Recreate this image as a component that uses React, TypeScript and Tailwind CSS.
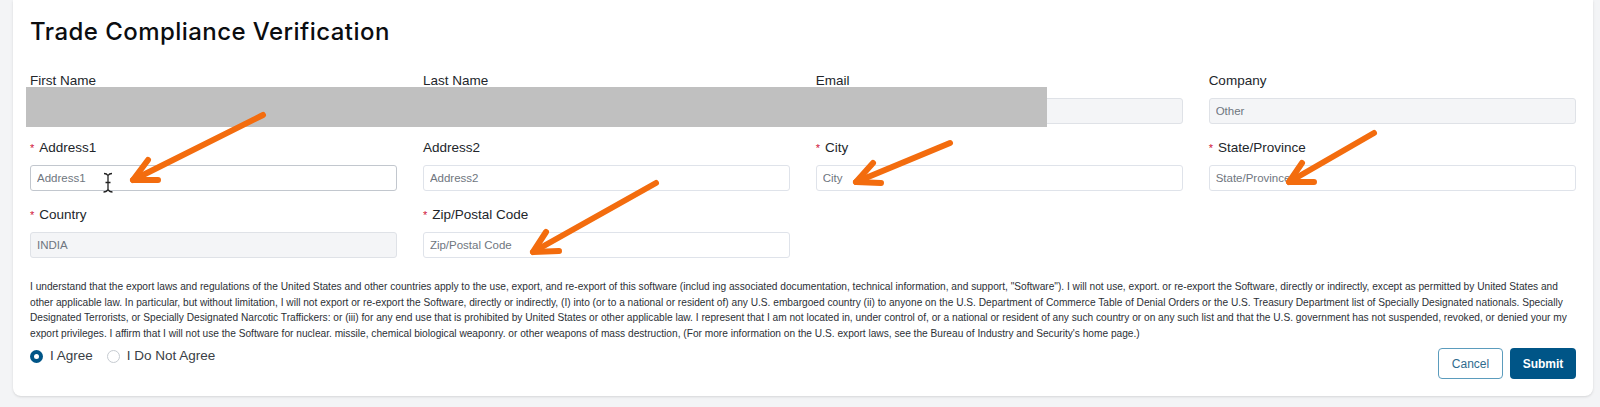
const legal = [
  `I understand that the export laws and regulations of the United States and other countries apply to the use, export, and re-export of this software (includ ing associated documentation, technical information, and support, "Software"). I will not use, export. or re-export the Software, directly or indirectly, except as permitted by United States and`,
  `other applicable law. In particular, but without limitation, I will not export or re-export the Software, directly or indirectly, (I) into (or to a national or resident of) any U.S. embargoed country (ii) to anyone on the U.S. Department of Commerce Table of Denial Orders or the U.S. Treasury Department list of Specially Designated nationals. Specially`,
  `Designated Terrorists, or Specially Designated Narcotic Traffickers: or (iii) for any end use that is prohibited by United States or other applicable law. I represent that I am not located in, under control of, or a national or resident of any such country or on any such list and that the U.S. government has not suspended, revoked, or denied your my`,
  `export privileges. I affirm that I will not use the Software for nuclear. missile, chemical biological weaponry. or other weapons of mass destruction, (For more information on the U.S. export laws, see the Bureau of Industry and Security's home page.)`,
];

type Field = { label: string; required?: boolean; placeholder?: string; value?: string; disabled?: boolean; dark?: boolean };

const fields: Field[] = [
  { label: "First Name", disabled: true },
  { label: "Last Name", disabled: true },
  { label: "Email", disabled: true },
  { label: "Company", value: "Other", disabled: true },
  { label: "Address1", required: true, placeholder: "Address1", dark: true },
  { label: "Address2", placeholder: "Address2" },
  { label: "City", required: true, placeholder: "City" },
  { label: "State/Province", required: true, placeholder: "State/Province" },
  { label: "Country", required: true, value: "INDIA", disabled: true },
  { label: "Zip/Postal Code", required: true, placeholder: "Zip/Postal Code" },
];

// flechas naranjas: cola, punta, y las dos alas de la cabeza
const arrows = [
  { tail: [263, 115], tip: [133, 180], a: [148, 160], b: [158, 180] },
  { tail: [656, 183], tip: [533, 252], a: [546, 232], b: [559, 251] },
  { tail: [950, 143], tip: [856, 182], a: [873, 163], b: [881, 183] },
  { tail: [1374, 133], tip: [1289, 182], a: [1302, 163], b: [1314, 182] },
];

function FormField({ field }: { field: Field }) {
  const border = field.dark ? "border-[#c2c7ce]" : field.disabled ? "border-[#dfe2e7]" : "border-[#dfe3ea]";
  return (
    <div className="flex flex-col">
      <label className="h-5 pt-[2px] text-[13.5px] leading-5 text-[#22262b] flex items-center">
        {field.required && <span className="text-[#d0123a] text-[11px] mr-[5px]">*</span>}
        {field.label}
      </label>
      <input
        readOnly
        value={field.value ?? ""}
        placeholder={field.placeholder}
        className={`mt-2 h-[26px] w-full rounded-[3px] border px-[6px] text-[11.5px] placeholder:text-[#6f7680] text-[#6f7680] outline-none ${border} ${
          field.disabled ? "bg-[#f4f5f7]" : "bg-white"
        }`}
      />
    </div>
  );
}

export default function App() {
  return (
    <div className="relative h-[407px] w-[1600px] overflow-hidden bg-[#f3f4f6] font-['Liberation_Sans',sans-serif]">
      <div className="ml-[13px] h-[396px] w-[1580px] rounded-b-lg bg-white px-[17px] pt-[17px] shadow-sm">
        <h1 className="mb-[23px] h-[30px] font-['Inter',sans-serif] text-[24px] font-medium leading-[30px] tracking-[0.45px] text-[#0b0d10]">
          Trade Compliance Verification
        </h1>

        <div className="grid grid-cols-4 gap-x-[25.5px] gap-y-[13px]">
          {fields.map((f) => (
            <FormField key={f.label} field={f} />
          ))}
        </div>

        <div className="mt-[21px] text-[10.17px] leading-[15.5px] text-[#2c3036]">
          {legal.map((line) => (
            <p key={line.slice(0, 20)} className="whitespace-nowrap">
              {line}
            </p>
          ))}
        </div>

        <div className="mt-[7px] flex items-start justify-between">
          <div className="flex h-4 items-center text-[13.5px] text-[#3a3f46]">
            <span className="flex h-[13px] w-[13px] items-center justify-center rounded-full bg-[#005587]">
              <span className="h-[5px] w-[5px] rounded-full bg-white" />
            </span>
            <span className="ml-[7px]">I Agree</span>
            <span className="ml-[14px] h-[13px] w-[13px] rounded-full border border-[#c6cbd1] bg-white" />
            <span className="ml-[7px]">I Do Not Agree</span>
          </div>
          <div className="flex gap-[7px]">
            <button className="h-[31px] w-[65px] rounded border border-[#5b9cbd] bg-white text-[12px] text-[#2f6b8e]">
              Cancel
            </button>
            <button className="h-[31px] w-[66px] rounded bg-[#005587] text-[12px] font-bold text-white">
              Submit
            </button>
          </div>
        </div>
      </div>

      {/* tapa gris de los datos */}
      <div className="absolute left-[26px] top-[87px] h-10 w-[1021px] bg-[#c0c0c0]" />

      <svg className="absolute left-0 top-0 pointer-events-none" width="1600" height="407" fill="none">
        {arrows.map((ar) => (
          <g key={ar.tail[0]} stroke="#f36c0e" strokeWidth="6" strokeLinecap="round" strokeLinejoin="round">
            <path d={`M${ar.tail[0]} ${ar.tail[1]}L${ar.tip[0]} ${ar.tip[1]}`} />
            <path d={`M${ar.a[0]} ${ar.a[1]}L${ar.tip[0]} ${ar.tip[1]}L${ar.b[0]} ${ar.b[1]}`} />
          </g>
        ))}
        {/* cursor de texto */}
        <path
          d="M104 173.500c2 0 3 .5 4 2c1-1.500 2-2 4-2M108 175.500V189.500M103.500 192c2 0 3.500-.5 4.500-2.500c1 2 2.500 2.500 4.500 2.500M105.500 182.500H110.500"
          stroke="#222"
          strokeWidth="1.300"
        />
      </svg>
    </div>
  );
}
